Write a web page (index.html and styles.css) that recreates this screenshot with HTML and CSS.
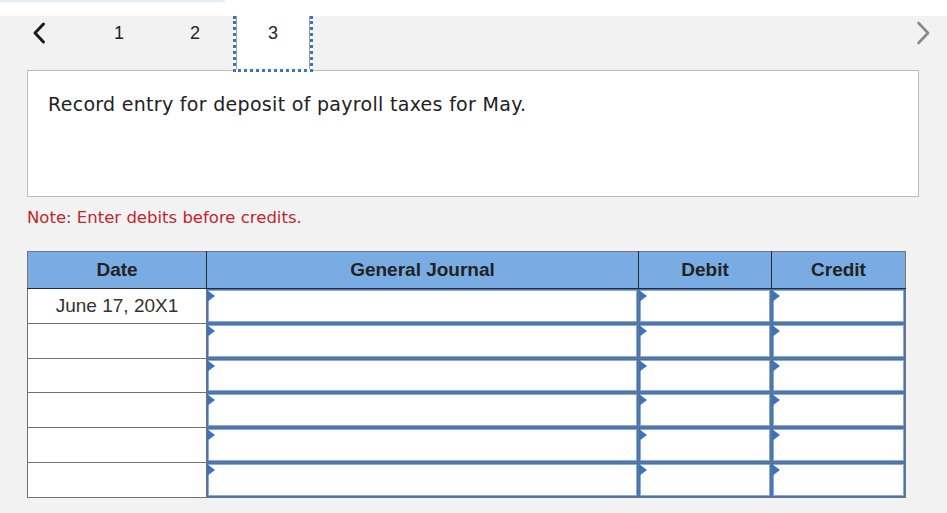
FILE: index.html
```html
<!DOCTYPE html>
<html>
<head>
<meta charset="utf-8">
<link rel="stylesheet" href="styles.css">
</head>
<body>
<div class="topstrip"><div class="progress"></div></div>
<main class="page">
  <nav class="steps">
    <button class="arrow prev" aria-label="Previous">
      <svg width="16" height="24" viewBox="0 0 16 24"><path d="M12.5 3 L4 12 L12.5 21" fill="none" stroke="#1a1a1a" stroke-width="3" stroke-linecap="round" stroke-linejoin="round"/></svg>
    </button>
    <div class="nums">
      <span class="num">1</span>
      <span class="num">2</span>
      <span class="num active">3</span>
    </div>
    <button class="arrow next" aria-label="Next">
      <svg width="16" height="26" viewBox="0 0 16 26"><path d="M3.5 3 L13 13 L3.5 23" fill="none" stroke="#8a8a8a" stroke-width="2.6" stroke-linecap="round" stroke-linejoin="round"/></svg>
    </button>
  </nav>
  <section class="question">Record entry for deposit of payroll taxes for May.</section>
  <p class="note">Note: Enter debits before credits.</p>
  <table class="journal">
    <colgroup>
      <col class="c-date"><col class="c-gj"><col class="c-dr"><col class="c-cr">
    </colgroup>
    <thead>
      <tr><th>Date</th><th>General Journal</th><th>Debit</th><th>Credit</th></tr>
    </thead>
    <tbody>
      <tr><td class="date">June 17, 20X1</td><td class="in"><div class="box"></div></td><td class="in"><div class="box"></div></td><td class="in"><div class="box"></div></td></tr>
      <tr><td class="date"></td><td class="in"><div class="box"></div></td><td class="in"><div class="box"></div></td><td class="in"><div class="box"></div></td></tr>
      <tr><td class="date"></td><td class="in"><div class="box"></div></td><td class="in"><div class="box"></div></td><td class="in"><div class="box"></div></td></tr>
      <tr><td class="date"></td><td class="in"><div class="box"></div></td><td class="in"><div class="box"></div></td><td class="in"><div class="box"></div></td></tr>
      <tr><td class="date"></td><td class="in"><div class="box"></div></td><td class="in"><div class="box"></div></td><td class="in"><div class="box"></div></td></tr>
      <tr><td class="date"></td><td class="in"><div class="box"></div></td><td class="in"><div class="box"></div></td><td class="in"><div class="box"></div></td></tr>
    </tbody>
  </table>
</main>
</body>
</html>
```
FILE: styles.css
```css
html, body {
  margin: 0;
  padding: 0;
}
body {
  background: #f2f2f2;
  font-family: "DejaVu Sans", Verdana, sans-serif;
  width: 947px;
  height: 513px;
  overflow: hidden;
}
.topstrip {
  height: 16px;
  background: #ffffff;
}
.progress {
  width: 225px;
  height: 2px;
  background: #e4ecf7;
}
.page {
  padding: 0 0 0 27px;
}
.steps {
  display: flex;
  align-items: flex-start;
  height: 54px;
  margin-left: -27px;
}
.arrow {
  border: 0;
  background: transparent;
  padding: 0;
  margin: 0;
  cursor: pointer;
  display: flex;
}
.arrow.prev {
  width: 81px;
  padding-left: 31px;
  padding-top: 5px;
  box-sizing: border-box;
}
.arrow.next {
  margin-left: auto;
  margin-right: 16px;
  padding-top: 4px;
}
.nums {
  display: flex;
}
.num {
  width: 76px;
  box-sizing: border-box;
  text-align: center;
  font-family: "Liberation Sans", Arial, sans-serif;
  font-size: 18px;
  color: #222;
  padding-top: 7px;
  height: 56px;
}
.num.active {
  width: 80px;
  background: #ffffff;
  border-left: 3px dotted #3b73bd;
  border-right: 3px dotted #3b73bd;
  border-bottom: 3px dotted #3b73bd;
  box-shadow: inset 1px 0 0 #a0a0a0, inset -1px 0 0 #a0a0a0;
  position: relative;
  z-index: 2;
}
.question {
  box-sizing: border-box;
  width: 892px;
  height: 127px;
  background: #ffffff;
  border: 1px solid #bdbdbd;
  padding: 20px 20px;
  font-size: 19px;
  letter-spacing: 0.3px;
  color: #222;
  line-height: 26px;
}
.note {
  margin: 9px 0 0;
  font-size: 16.5px;
  line-height: 24px;
  color: #c0262c;
}
.journal {
  margin-top: 21px;
  border-collapse: collapse;
  table-layout: fixed;
  width: 878px;
  font-family: "Liberation Sans", Arial, sans-serif;
}
.c-date { width: 179px; }
.c-gj { width: 432px; }
.c-dr { width: 133px; }
.c-cr { width: 134px; }
.journal th {
  background: #7aace4;
  height: 36px;
  padding: 0;
  font-size: 19px;
  font-weight: bold;
  color: #222;
  border: 1px solid #2a2a2a;
  border-top-color: #777;
  text-align: center;
}
.journal th:first-child { border-left-color: #777; }
.journal th:last-child { border-right-color: #777; }
.journal td {
  height: 33.8px;
  padding: 0;
  border: 1px solid #737373;
  background: #ffffff;
}
.journal td.date {
  text-align: center;
  font-size: 19px;
  color: #333;
}
.journal td.in {
  position: relative;
}
.box {
  position: absolute;
  inset: 0;
  border: 1px solid #3f76bf;
  box-shadow: inset 0 0 0 1px #86acdf;
  background: #ffffff;
}
.box::before {
  content: "";
  position: absolute;
  left: -1px;
  top: 0;
  border-left: 8px solid #3b73bd;
  border-top: 6px solid transparent;
  border-bottom: 6px solid transparent;
}
```
